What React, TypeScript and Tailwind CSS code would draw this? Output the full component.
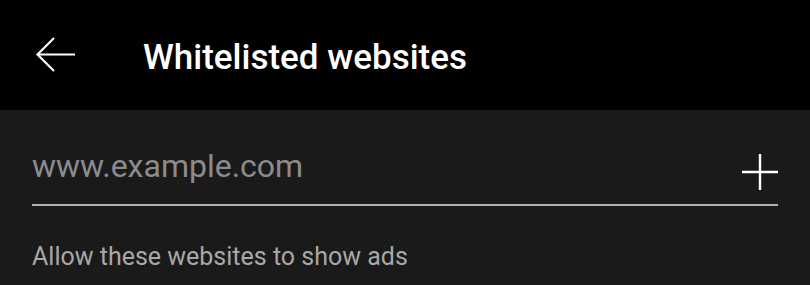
import React from "react";

const BackArrow = () => (
  <svg width="40" height="36" viewBox="0 0 40 36" fill="none" stroke="white" strokeWidth="2.2">
    <path d="M1.5 17.5 H39" />
    <path d="M18 1 L1.5 17.5 L18 34" />
  </svg>
);

const PlusIcon = () => (
  <svg width="36" height="36" viewBox="0 0 36 36" fill="none" stroke="white" strokeWidth="2.4">
    <path d="M18 0 V36" />
    <path d="M0 18 H36" />
  </svg>
);

export default function App() {
  return (
    <div className="w-[810px] h-[285px] bg-[#1a1a1a] font-['Roboto',sans-serif]">
      {/* top bar */}
      <header className="h-[110px] bg-black flex items-center pl-[36px]">
        <BackArrow />
        <h1 className="ml-[67px] mt-[7px] text-white text-[35px] font-medium">Whitelisted websites</h1>
      </header>

      <div className="px-[32px]">
        <div className="flex items-center justify-between h-[96px] pt-[30px] border-b-2 border-[#b0b0b0]">
          <span className="text-[32px] leading-[40px] text-[#8c8c8c] mb-[12px]">www.example.com</span>
          <PlusIcon />
        </div>
        <p className="mt-[35px] text-[25px] leading-[32px] text-[#a8a8a8]">Allow these websites to show ads</p>
      </div>
    </div>
  );
}
